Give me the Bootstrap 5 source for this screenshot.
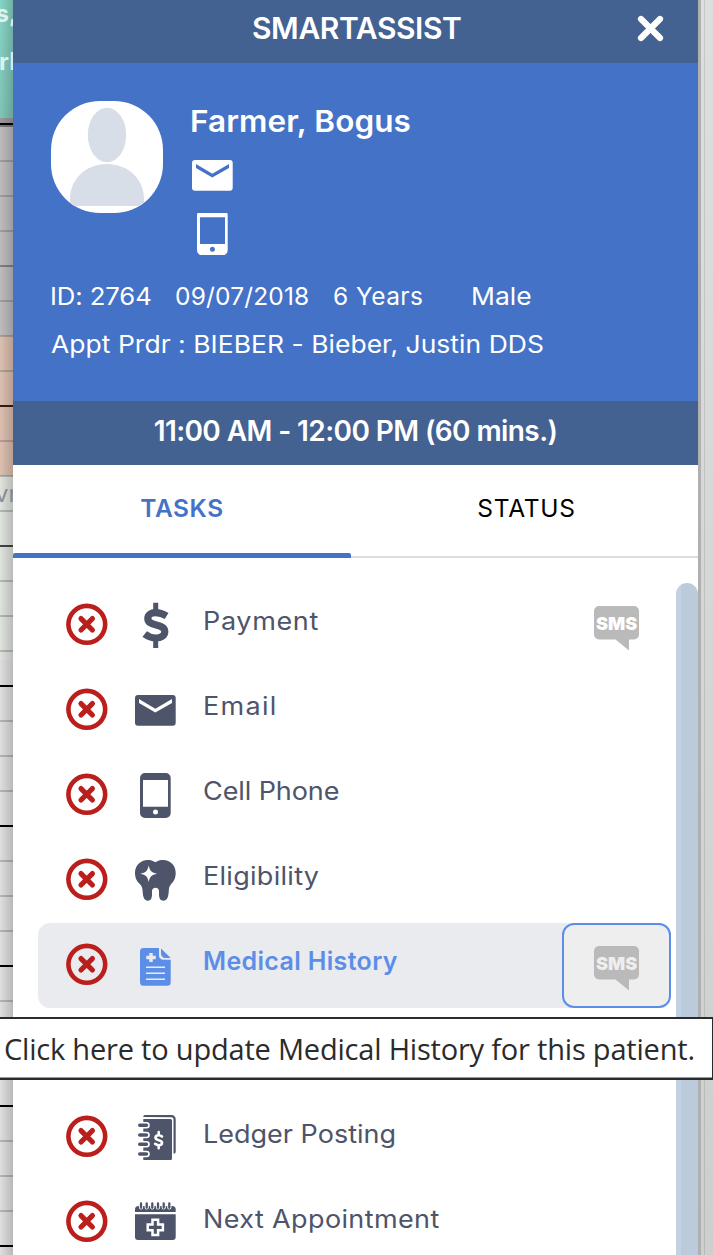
<!DOCTYPE html>
<html lang="en">
<head>
<meta charset="utf-8">
<meta name="viewport" content="width=device-width, initial-scale=1">
<title>SmartAssist</title>
<link href="https://cdn.jsdelivr.net/npm/bootstrap@5.3.0/dist/css/bootstrap.min.css" rel="stylesheet">
<style>
  body { width: 713px; height: 1255px; overflow: hidden; font-family: Inter, "Open Sans", sans-serif; background: #fff; }
  svg { display: block; flex: none; }
  .app { height: 1255px; }
  /* schedule grid visible on the left */
  .sched { width: 13px; flex: none; position: relative; overflow: hidden; font-size: 24px;
    background:
      linear-gradient(90deg, rgba(0,0,0,0), rgba(0,0,0,.17)),
      linear-gradient(#86d6c6, #80c5b7) 0 0/100% 118px no-repeat,
      linear-gradient(#999 5px, #000 5px, #000 7px, #777 7px) 0 118px/100% 9px no-repeat,
      linear-gradient(#3a1a10, #3a1a10) 0 405px/100% 2px no-repeat,
      linear-gradient(#808080, #808080) 0 265px/100% 2px no-repeat,
      linear-gradient(#444, #444) 0 545px/100% 2px no-repeat,
      repeating-linear-gradient(transparent 0 125px, #000 125px 127px, transparent 127px 140px) 0 560px/100% 695px no-repeat,
      repeating-linear-gradient(rgba(90,90,90,.32) 0 2px, transparent 2px 35px) 0 160px/100% 1095px no-repeat,
      linear-gradient(#bdbdbd 0 336px, #dcbfb0 336px 476px, #dfe3de 476px 660px, #dedede 660px); }
  .sched span { position: absolute; line-height: 28px; white-space: nowrap; }
  .panel { width: 685px; flex: none; }
  .panel > * { flex-shrink: 0; }
  .edge { width: 15px; flex: none; background: linear-gradient(90deg, #b0b0b0 3px, transparent 3px, transparent 6px, rgba(0,0,0,.1) 6px, rgba(0,0,0,.1) 7px, transparent 7px), linear-gradient(#dedede, #cecece); }
  .bar-head, .bar-time { background: #436191; }
  .bar-head { height: 63px; padding: 10px 34px 0 239px; }
  .bar-time { height: 64px; padding-top: 12px; font-size: 28px; font-weight: 600; line-height: 36px; letter-spacing: -.59px; }
  .hero { height: 338px; background: #4472c7; padding: 38px 38px 0; }
  .avatar { width: 112px; height: 112px; border-radius: 49px; background: #fff; overflow: hidden; }
  .ttl { font-size: 30px; font-weight: 600; line-height: 36px; }
  .t25 { font-size: 24.5px; line-height: 30px; white-space: nowrap; }
  /* widened letterforms */
  .wide { transform: scaleX(1.08); transform-origin: 0 50%; }
  .wide-5 { transform: scaleX(1.05); transform-origin: 0 50%; }
  .facts { padding-top: 24px; }
  .tabs { height: 93px; box-shadow: inset 0 -2px #ddd; }
  .tabs .nav-link { padding: 28px 0 0; border: 0; border-radius: 0; color: #000; text-align: center; }
  .tabs .nav-link.active { color: #4472c7; font-weight: 600; background: transparent; }
  .tabs .nav-link.active::after { content: ""; display: block; height: 5px; margin-top: 30px; background: #4472c7; border-radius: 2px 2px 0 0; }
  .tasks { padding: 25px 5px 0 25px; width: 663px; }
  .task { height: 85px; border-radius: 12px; color: #4e5469; padding-left: 28px; --hole: #fff; }
  .task.on { background: #eaebef; color: #5c8ee8; --hole: #eaebef; }
  .task .ring { margin-top: 19px; }
  .task .ico { margin: 19px 25px 0 26px; }
  .task .lbl { font-size: 25px; line-height: 30px; margin-top: 23px; white-space: nowrap; height: 30px; }
  .task.covered ~ .task .lbl { margin-top: 24px; }
  .task.on .lbl { font-weight: 600; }
  .task .sms { width: 109px; height: 85px; border: 2px solid transparent; border-radius: 12px; background: transparent; padding: 21px 0 0 30px; color: #fff; }
  .task.on .sms { border-color: #5c8ee8; background: #eee; color: #eee; }
  .task.covered { height: 87px; }
  .track { width: 22px; height: 672px; margin-top: 25px; border-radius: 11px 11px 0 0; background: linear-gradient(90deg, #c2d2e2 5px, #bbcbdc 5px); }
  .tip { position: absolute; left: 0; top: 1017px; width: 713px; height: 63px; background: #fff; color: #2b2b2b; border: solid #2b2b2b; border-width: 2px 1px 2px 0; box-shadow: inset 0 -1px #999; font: 29px/60px "Open Sans", sans-serif; letter-spacing: -.2px; padding-left: 4px; white-space: nowrap; }
</style>
</head>
<body class="position-relative">
<svg width="0" height="0" class="position-absolute">
  <symbol id="ring" viewBox="0 0 42 46"><g fill="none" stroke="#bb1f1b"><circle cx="20.8" cy="22.3" r="18.4" stroke-width="4.6"/><path d="M15 16.6L26.4 28M26.4 16.6L15 28" stroke-width="5.2" stroke-linecap="round"/></g></symbol>
  <symbol id="mail" viewBox="1 8 41 31"><path fill="currentColor" fill-rule="evenodd" d="M4 8h34.7a3 3 0 0 1 3 3v24.7a3 3 0 0 1-3 3H4a3 3 0 0 1-3-3V11a3 3 0 0 1 3-3zM5 12v4l16.3 9.6L38 16v-4l-16.7 9.7z"/></symbol>
  <symbol id="phone" viewBox="6 1 31 45"><path fill="currentColor" fill-rule="evenodd" d="M11 1h20.7a5 5 0 0 1 5 5v35a5 5 0 0 1-5 5H11a5 5 0 0 1-5-5V6a5 5 0 0 1 5-5zM9 8v26.7h25V8zM21.5 37.5a2.5 2.5 0 1 0 0 5 2.5 2.5 0 0 0 0-5z"/></symbol>
</svg>

<div class="app d-flex">
  <aside class="sched">
    <span class="text-white opacity-75 fw-bold" style="right:-4px;top:0">s,</span>
    <span class="text-white opacity-75 fw-bold" style="left:-1px;top:48px">rl</span>
    <span class="text-secondary opacity-75" style="left:-5px;top:480px">vn</span>
  </aside>

  <main class="panel d-flex flex-column bg-white">
    <header class="bar-head d-flex justify-content-between text-white">
      <div class="ttl" style="letter-spacing:-.4px">SMARTASSIST</div>
      <svg width="27" height="27" viewBox="0 0 27 27" style="margin-top:5px"><path d="M4 4l19 19M23 4L4 23" stroke="#fff" stroke-width="6.2" stroke-linecap="round"/></svg>
    </header>

    <section class="hero text-white">
      <div class="d-flex" style="height:156px">
        <div class="avatar"><svg width="112" height="112" viewBox="0 0 112 112" fill="#d8dee8"><ellipse cx="56" cy="34" rx="19.2" ry="27.2"/><path d="M19 105V98C19 78 35 63 56 63S93 78 93 98v7z"/></svg></div>
        <div style="padding:2px 0 0 27px">
          <div class="ttl wide-5" style="letter-spacing:.08px">Farmer, Bogus</div>
          <svg width="41" height="31" style="margin:21px 0 22px 2px"><use href="#mail"/></svg>
          <svg width="31" height="42.3" viewBox="6 3.7 31 42.3" style="margin-left:7px"><use href="#phone" x="6" y="1" width="31" height="45"/></svg>
        </div>
      </div>
      <div class="facts t25 d-flex">
        <span class="wide-5" style="width:125px;letter-spacing:-.1px;margin-left:-1px">ID: 2764</span>
        <span style="width:158px;letter-spacing:.17px">09/07/2018</span>
        <span style="width:138px;letter-spacing:.45px">6 Years</span>
        <span class="wide">Male</span>
      </div>
      <div class="t25 wide" style="margin-top:18px;letter-spacing:.03px">Appt Prdr : BIEBER - Bieber, Justin DDS</div>
    </section>

    <div class="bar-time text-white text-center">11:00 AM - 12:00 PM (60 mins.)</div>

    <nav class="tabs nav flex-nowrap t25">
      <a class="nav-link active" style="width:338px;letter-spacing:.6px">TASKS</a>
      <a class="nav-link" style="width:347px;letter-spacing:.74px;padding-left:4px">STATUS</a>
    </nav>

    <div class="d-flex">
      <div class="tasks">
        <div class="task d-flex">
          <svg class="ring" width="42" height="46"><use href="#ring"/></svg>
          <svg class="ico" width="44" height="46" viewBox="0 0 44 46"><path d="M19.2 .7h5V9h-5zM19.2 38h5v8h-5z" fill="currentColor"/><path d="M32.6 14C29 11.8 25.6 10.6 21.6 10.6c-5 0-7.8 2.4-7.8 5.8 0 8.8 17 4.4 17 13.2 0 4.2-3.8 6.4-8.8 6.4-4.6 0-8.4-1.700-11.300-4" fill="none" stroke="currentColor" stroke-width="7.2"/></svg>
          <span class="lbl wide" style="letter-spacing:.6px">Payment</span>
          <button class="sms ms-auto d-flex align-items-start"><svg width="46" height="46" viewBox="0 0 46 46"><path d="M5 0h35a5 5 0 0 1 5 5v23.500a5 5 0 0 1-5 5h-5V44.500L21.500 33.500H5a5 5 0 0 1-5-5V5a5 5 0 0 1 5-5z" fill="#bababa"/><text x="2" y="24.200" font-family="Inter" font-weight="900" font-size="18" fill="currentColor">SMS</text></svg></button>
        </div>
        <div class="task d-flex">
          <svg class="ring" width="42" height="46"><use href="#ring"/></svg>
          <svg class="ico" width="44" height="46" viewBox="0 0 44 46"><use href="#mail" x="1" y="8" width="41" height="31"/></svg>
          <span class="lbl wide" style="letter-spacing:1.2px">Email</span>
        </div>
        <div class="task d-flex">
          <svg class="ring" width="42" height="46"><use href="#ring"/></svg>
          <svg class="ico" width="44" height="46" viewBox="0 0 44 46"><use href="#phone" x="6" y="1" width="31" height="45"/></svg>
          <span class="lbl wide" style="letter-spacing:-.08px">Cell Phone</span>
        </div>
        <div class="task d-flex">
          <svg class="ring" width="42" height="46"><use href="#ring"/></svg>
          <svg class="ico" width="44" height="46" viewBox="0 0 44 46"><path fill="currentColor" fill-rule="evenodd" d="M21.300 5.200C24 3.600 26 3 29 3c7.500 0 12.700 5.500 12.700 13 0 6-2.700 9-5.200 12-1.600 2-1.600 4-1.800 7-.4 5.500-2 8.700-5.200 8.700-3.300 0-4.500-2.400-4.500-6.700v-3c0-2-1.400-3.300-3.500-3.300S18 32 18 34v3c0 4.300-1 6.700-4.200 6.700S9 40.500 8.700 35c-.2-3-.4-5-2-7C3.700 25 1 22 1 16 1 8.500 6.500 3 13.700 3c3 0 5 .6 7.600 2.200zM14.700 8.200c-1 5.500-2.700 7.500-8.500 8.500 5.800 1 7.500 3 8.500 8.500 1-5.500 2.700-7.500 8.500-8.500-5.800-1-7.500-3-8.500-8.500z"/></svg>
          <span class="lbl wide" style="letter-spacing:.27px">Eligibility</span>
        </div>
        <div class="task on d-flex">
          <svg class="ring" width="42" height="46"><use href="#ring"/></svg>
          <svg class="ico" width="44" height="46" viewBox="0 0 44 46"><path fill="currentColor" d="M9.500 6H25v7.500a4.300 4.300 0 0 0 4.300 4.300h7.400V40.200a3.500 3.500 0 0 1-3.500 3.500H9.500A3.500 3.500 0 0 1 6 40.200V9.500A3.500 3.500 0 0 1 9.500 6zM27 6.500l9.700 9.500h-5.500A4.200 4.200 0 0 1 27 11.800z"/><path d="M17 11v9M12.300 15.500h9.400" stroke="var(--hole)" stroke-width="3.400"/><path d="M12 25.200h19M12 31.200h19M12 37.200h19" stroke="var(--hole)" stroke-width="1.600"/></svg>
          <span class="lbl" style="letter-spacing:.34px">Medical History</span>
          <button class="sms ms-auto d-flex align-items-start"><svg width="46" height="46" viewBox="0 0 46 46"><path d="M5 0h35a5 5 0 0 1 5 5v23.500a5 5 0 0 1-5 5h-5V44.500L21.500 33.500H5a5 5 0 0 1-5-5V5a5 5 0 0 1 5-5z" fill="#bababa"/><text x="2" y="24.200" font-family="Inter" font-weight="900" font-size="18" fill="currentColor">SMS</text></svg></button>
        </div>
        <div class="task covered"></div>
        <div class="task d-flex">
          <svg class="ring" width="42" height="46"><use href="#ring"/></svg>
          <svg class="ico" width="44" height="46" viewBox="0 0 44 46"><path d="M9.300 3V2.500A1.500 1.500 0 0 1 10.800 1H37.500a4.200 4.200 0 0 1 4.200 4.200V38a1.800 1.800 0 0 1-2.200 1.500V5a2 2 0 0 0-2-1.800zM9.300 5H36.500a1.500 1.500 0 0 1 1.500 1.500V44.500a1.500 1.500 0 0 1-1.500 1.500H9.300z" fill="currentColor"/><g stroke-linecap="round"><path d="M9 11.300h3.500M9 21h3.500M9 30.300h3.500M9 40h3.500" stroke="#fff" stroke-width="6.600"/><path d="M5.800 11.300h6.600M5.800 21h6.600M5.800 30.300h6.600M5.800 40h6.600" stroke="currentColor" stroke-width="3.600"/></g><path d="M28 22.500c-1-.9-2.100-1.200-3.300-1.200-2 0-3.200.9-3.200 2.400 0 3.300 6.500 1.600 6.500 5 0 1.600-1.300 2.500-3.200 2.500-1.500 0-2.700-.5-3.700-1.400M24.700 18v3M24.700 31.300v3" fill="none" stroke="#fff" stroke-width="2.600" stroke-linecap="round"/></svg>
          <span class="lbl wide">Ledger Posting</span>
        </div>
        <div class="task d-flex">
          <svg class="ring" width="42" height="46"><use href="#ring"/></svg>
          <svg class="ico" width="44" height="46" viewBox="0 0 44 46"><path fill="currentColor" d="M4.500 7h33.700a3.500 3.500 0 0 1 3.500 3.500V13H1v-2.500A3.500 3.500 0 0 1 4.500 7zM1 15.200h40.700V38a3 3 0 0 1-3 3H4a3 3 0 0 1-3-3z"/><g stroke-linecap="round"><path d="M7 6.500v2M12.700 6.500v2M18.300 6.500v2M24 6.500v2M29.700 6.500v2M35.300 6.500v2" stroke="#fff" stroke-width="4.200"/><path d="M7 4.500v4.300M12.700 4.500v4.300M18.300 4.500v4.300M24 4.500v4.300M29.700 4.500v4.300M35.300 4.500v4.300" stroke="currentColor" stroke-width="2.300"/></g><path d="M18.500 20.800h5.600v4.800h4.800v5.600h-4.800v4.800h-5.600v-4.800h-4.800v-5.600h4.800z" fill="none" stroke="#fff" stroke-width="2.500"/></svg>
          <span class="lbl wide" style="letter-spacing:.35px">Next Appointment</span>
        </div>
      </div>
      <div class="track"></div>
    </div>
  </main>
  <div class="edge"></div>
</div>
<div class="tip">Click here to update Medical History for this patient.</div>
<script src="https://cdn.jsdelivr.net/npm/bootstrap@5.3.0/dist/js/bootstrap.bundle.min.js"></script>
</body>
</html>
